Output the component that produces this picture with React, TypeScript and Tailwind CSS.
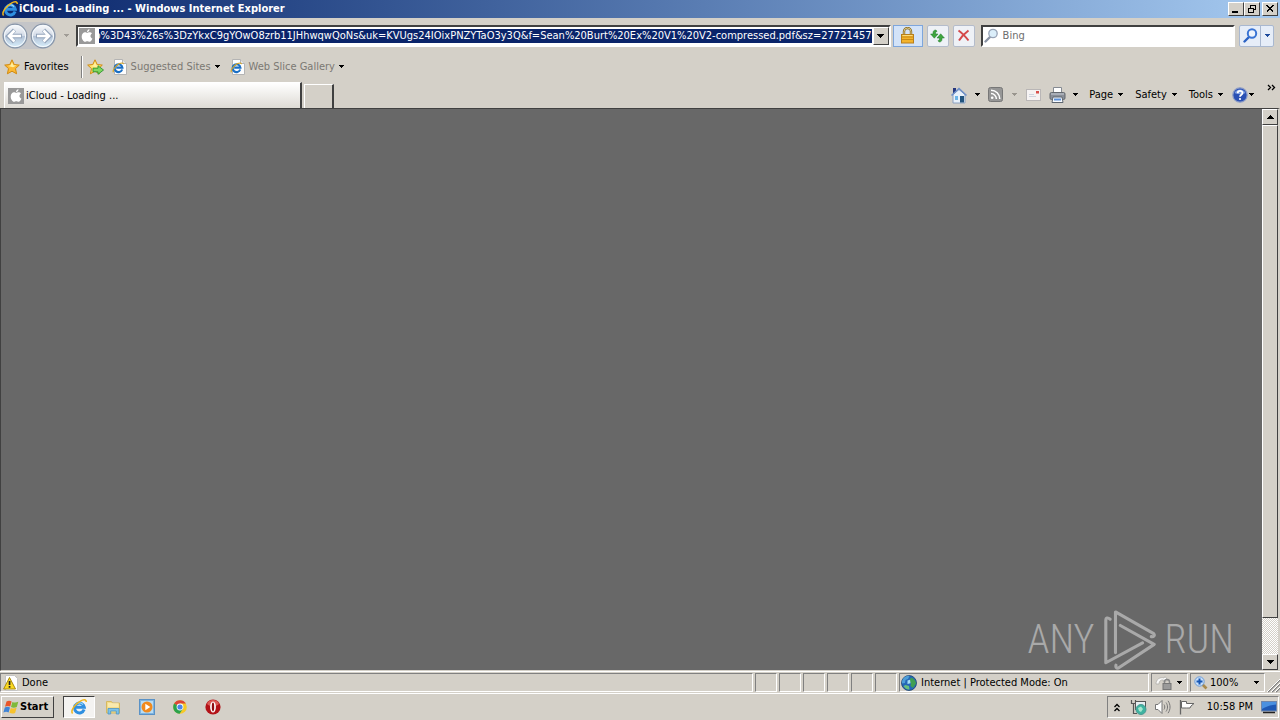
import { useEffect, useRef, useState, type ReactNode } from "react";

const URL_TEXT =
  "6p%3D43%26s%3DzYkxC9gYOwO8zrb11JHhwqwQoNs&uk=KVUgs24IOixPNZYTaO3y3Q&f=Sean%20Burt%20Ex%20V1%20V2-compressed.pdf&sz=27721457";

const MENUS = ["Page", "Safety", "Tools"];

function Caret({ className = "text-black" }: { className?: string }) {
  return (
    <svg className={`shrink-0 ${className}`} width="7" height="4" viewBox="0 0 7 4" fill="currentColor" shapeRendering="crispEdges">
      <path d="M1 0h5v1H1zM2 1h3v1H2zM3 2h1v1H3z" />
    </svg>
  );
}

function IeLogo({ size = 16 }: { size?: number }) {
  return (
    <svg className="shrink-0" width={size} height={size} viewBox="0 0 16 16" fill="none">
      <path d="M13.1 10.6A4.900 4.900 0 1 1 13.300 8.200H5" stroke="#2f8fe0" strokeWidth="3" />
      <path d="M4.200 6.800A4.600 4.600 0 0 1 12 5.600" stroke="#9bdcfb" strokeWidth="1.200" />
      <path d="M1.600 14.600C-.8 11.800 4 5 9 2.300 12.400.3 15.500.2 15.200 3" stroke="#f0b51c" strokeWidth="1.500" />
    </svg>
  );
}

function PageIe() {
  return (
    <svg className="shrink-0" width="16" height="16" viewBox="0 0 16 16" fill="none">
      <path d="M2.500.5h8l4 4v11h-12z" fill="#fdfdfd" stroke="#b4b4b4" />
      <path d="M10.500.5v4h4" fill="#e4e4e4" stroke="#b4b4b4" />
      <path d="M10.200 10.500A3.900 3.900 0 1 1 10.400 8.600H4.200" stroke="#1b6fc4" strokeWidth="2.100" />
      <path d="M1.400 13.200C.2 11 4 6.400 7.600 4.600 10 3.500 11.500 3.800 11.300 5.200" stroke="#d9a520" strokeWidth="1.100" />
    </svg>
  );
}

function AppleIcon() {
  return (
    <svg className="shrink-0" width="16" height="16" viewBox="0 0 16 16">
      <rect width="16" height="16" fill="#999" />
      <path
        fill="#fff"
        d="M10.500 1.300c.1 1.500-1.100 2.800-2.500 2.900C7.800 2.700 9.100 1.400 10.500 1.300zM8.200 4.900c.6 0 1.400-.8 2.600-.7.9.1 1.700.5 2.200 1.200-2.200 1.300-1.900 4.200.4 5.100-.6 1.600-1.600 3.300-2.800 3.300-.9 0-1.300-.6-2.300-.6s-1.400.6-2.300.6C4.400 13.800 2.700 11 2.700 8.500c0-2.600 1.700-4.100 3.300-4.200 1 0 1.700.6 2.200.6z"
      />
    </svg>
  );
}

function Star({ add = false }: { add?: boolean }) {
  return (
    <svg className="shrink-0" width="17" height="16" viewBox="0 0 17 16">
      <path d="M8 .8l2.200 4.700 5.100.6-3.800 3.500 1.100 5.200L8 12.200l-4.600 2.600 1.100-5.200L.7 6.100l5.100-.6z" fill={add ? "#fde36a" : "#fcb934"} stroke="#d18a10" />
      <path d="M8 3l1.300 3.200 3.200.4L9 8.300 4 7l2.600-.8z" fill="#fff0a0" />
      {add && <path d="M6 9.200h5V6.700l5.500 4.300-5.500 4.300v-2.500H6z" fill="#7fd860" stroke="#2c9430" strokeWidth=".9" />}
    </svg>
  );
}

function NavCircle({ flip = false }: { flip?: boolean }) {
  return (
    <svg width="26" height="26" viewBox="0 0 26 26" fill="none">
      <defs>
        <linearGradient id="orb" x1="0" y1="0" x2="0" y2="1">
          <stop offset="0" stopColor="#fafbfd" />
          <stop offset=".48" stopColor="#d3dbe7" />
          <stop offset=".52" stopColor="#b3c2d6" />
          <stop offset="1" stopColor="#d8f0fd" />
        </linearGradient>
      </defs>
      <circle cx="13" cy="13" r="11.800" fill="url(#orb)" stroke="#8795a8" strokeWidth="1.200" />
      <circle cx="13" cy="13" r="10.600" stroke="#f6fafd" />
      <g transform={flip ? "matrix(-1 0 0 1 26 0)" : undefined}>
        <path d="M12.500 7L6.500 13l6 6M7 13h13" stroke="#94a5bb" strokeWidth="4.400" />
        <path d="M12.500 7.500L7 13l5.500 5.500M7.500 13H19" stroke="#fff" strokeWidth="2.600" />
      </g>
    </svg>
  );
}

function LockIcon() {
  return (
    <svg width="15" height="17" viewBox="0 0 15 17" fill="none">
      <path d="M4 8V4.500a3.500 3.500 0 0 1 7 0V8" stroke="#8a6a20" strokeWidth="2.400" />
      <path d="M4 8V4.500a3.500 3.500 0 0 1 7 0V8" stroke="#d9c98c" strokeWidth="1" />
      <rect x="1.500" y="7.500" width="12" height="8.500" fill="#f3b32c" stroke="#b87f1c" />
      <path d="M2 10h11M2 12.500h11" stroke="#c98b17" />
      <path d="M2.500 8.500h10" stroke="#fbdc7c" />
    </svg>
  );
}

function RefreshIcon() {
  return (
    <svg width="15" height="14" viewBox="0 0 15 14" fill="#3fa53f" stroke="#1f7a28" strokeWidth=".5">
      <path d="M6 1C4 1 3 2 3 4v1H.600l3.700 4.200L8 5H5.600V4c0-1 .4-1.400 1.400-1.600z" />
      <path d="M9 13c2 0 3-1 3-3V9h2.400l-3.700-4.200L7 9h2.400v1c0 1-.4 1.400-1.400 1.600z" />
    </svg>
  );
}

function StopIcon() {
  return (
    <svg width="13" height="13" viewBox="0 0 13 13" fill="none">
      <path d="M1.500 1.500c3 2 6 5 10 10M11.500 1.500c-4 3-7 6-9.500 10" stroke="#d4484a" strokeWidth="2" />
    </svg>
  );
}

function SearchIcon({ blue = false }: { blue?: boolean }) {
  return (
    <svg className="shrink-0" width="15" height="15" viewBox="0 0 15 15" fill="none">
      <path d="M6 9l-4.500 4.500" stroke={blue ? "#2a62c4" : "#8a93a4"} strokeWidth="2.400" strokeLinecap="round" />
      <circle cx="9" cy="5.500" r="4.200" fill={blue ? "#eef4fd" : "#dbeefa"} stroke={blue ? "#3a74d4" : "#97a3b6"} strokeWidth={blue ? 2 : 1.3} />
    </svg>
  );
}

function HomeIcon() {
  return (
    <svg width="18" height="18" viewBox="0 0 18 18">
      <path d="M3 2h3v6H3z" fill="#26377e" />
      <path d="M3 8.500l6-5 6 5V17H3z" fill="#e8f1fb" stroke="#8ba0c0" />
      <path d="M1.500 9.500L9 2.500l7.500 7" fill="none" stroke="#6f90c8" strokeWidth="1.600" />
      <path d="M5 10h3v4H5z" fill="#6db6e8" />
      <path d="M10 10h4v6.500h-4z" fill="#22547f" />
    </svg>
  );
}

function RssIcon() {
  return (
    <svg width="15" height="15" viewBox="0 0 15 15" fill="none">
      <rect x=".5" y=".5" width="14" height="14" rx="2" fill="#969696" stroke="#777" />
      <path d="M3 3.200a8.800 8.800 0 0 1 8.800 8.800M3 6.600A5.400 5.400 0 0 1 8.400 12" stroke="#fff" strokeWidth="1.500" />
      <circle cx="4.200" cy="10.800" r="1.300" fill="#fff" />
    </svg>
  );
}

function MailIcon() {
  return (
    <svg width="15" height="12" viewBox="0 0 15 12" fill="none">
      <rect x=".5" y=".5" width="14" height="11" fill="#f6f3f3" stroke="#b9b6b6" />
      <rect x="10" y="2" width="3" height="2.500" fill="#d8504c" />
      <path d="M3 5.500h5M3 7.500h7" stroke="#cdd3de" />
    </svg>
  );
}

function PrintIcon() {
  return (
    <svg width="17" height="16" viewBox="0 0 17 16">
      <path d="M4.500.5h8v5h-8z" fill="#fff" stroke="#858a92" />
      <rect x="1" y="5.500" width="15" height="7" rx="1.500" fill="#8a8f98" stroke="#64686e" />
      <path d="M2 7h13" stroke="#c9ced6" />
      <path d="M4 10h9l1 5.500H3z" fill="#f8fbff" stroke="#5e6670" />
      <path d="M5 12.500h7" stroke="#5b8fd6" strokeWidth="2" />
    </svg>
  );
}

function HelpIcon() {
  return (
    <svg width="16" height="16" viewBox="0 0 16 16" fill="none">
      <circle cx="8" cy="8" r="7.200" fill="#2a50b4" stroke="#8c9cc6" strokeWidth="1.200" />
      <path d="M2.500 6a6 6 0 0 1 11 0c-3 1.500-8 1.500-11 0z" fill="#7b9ce2" />
      <path d="M5.700 6.200c0-3 4.800-3 4.800-.2C10.500 7.800 8 7.600 8 9.700" stroke="#fff" strokeWidth="1.800" />
      <circle cx="8" cy="12" r="1.100" fill="#fff" />
    </svg>
  );
}

function GlobeIcon() {
  return (
    <svg className="shrink-0" width="16" height="16" viewBox="0 0 16 16">
      <circle cx="8" cy="8" r="7.500" fill="#2467b8" stroke="#1d4270" strokeWidth=".8" />
      <path d="M2 4c2-3 5-3.500 6.500-3L7 4 4.500 5 4 8 1 8.500C.8 7 1 5.500 2 4z" fill="#4f9fd8" />
      <path d="M10 2.500c3 1 5 3.500 5 6L12 13l-2.500-2L10 8 8 6z" fill="#3f9f52" />
      <path d="M4.500 10l3.500 1 .5 3.500C6 15 3.500 13 2.500 11z" fill="#69c07d" />
      <path d="M6.500 5.500l2.500-.8.5 3.600-3 .8z" fill="#a6e0f5" />
    </svg>
  );
}

function WarnIcon() {
  return (
    <svg className="shrink-0" width="16" height="16" viewBox="0 0 16 16">
      <path d="M2.500.5h9l3 3v12h-12z" fill="#fff" stroke="#c5c5c5" />
      <path d="M6.500 2.500L12.500 14H.600z" fill="#fbd920" stroke="#a88a10" />
      <path d="M5.700 6h1.700v4H5.700zM5.700 11h1.700v1.700H5.700z" fill="#222" />
    </svg>
  );
}

function ProtectIcon() {
  return (
    <svg width="18" height="16" viewBox="0 0 18 16" fill="none">
      <path d="M1 9a6 6 0 0 1 8-6l1-1.500 3 4-5 1 .5-1.500C6 4.500 4 6 4 9z" fill="#fafafa" stroke="#b0aeaa" strokeWidth=".8" />
      <path d="M9.500 9V7a2.500 2.500 0 0 1 5 0v2" stroke="#888" strokeWidth="1.500" />
      <rect x="8" y="8.500" width="8" height="6" fill="#9a9a9a" stroke="#777" />
    </svg>
  );
}

function ZoomIcon() {
  return (
    <svg width="14" height="14" viewBox="0 0 14 14" fill="none">
      <path d="M8.500 8.500l4 4" stroke="#a98a4c" strokeWidth="2.600" />
      <circle cx="5.500" cy="5.500" r="4.700" fill="#c6def8" stroke="#6d9cd8" />
      <path d="M5.500 2.500v6M2.500 5.500h6" stroke="#1656b4" strokeWidth="2" />
    </svg>
  );
}

function WindowsFlag() {
  return (
    <svg className="shrink-0" width="17" height="16" viewBox="0 0 17 16">
      <path d="M3.500 2.600C5.200 1.500 7 1.600 8.600 2.500L7.200 7.600C5.600 6.700 3.900 6.600 2 7.700z" fill="#e8562a" />
      <path d="M9.400 2.900c1.900 1 3.700.9 5.900-.1l-1.500 5.100c-1.900 1-3.900 1.100-5.800.1z" fill="#7fb93a" />
      <path d="M1.800 8.500c1.800-1 3.600-.9 5.200 0l-1.400 5C3.900 12.600 2.200 12.600.4 13.600z" fill="#3f84d6" />
      <path d="M7.800 8.900c1.900 1 3.700.9 5.800-.1l-1.500 5.100c-2 1-3.900.9-5.700-.1z" fill="#f7c22c" />
    </svg>
  );
}

function FolderIcon() {
  return (
    <svg width="17" height="16" viewBox="0 0 17 16">
      <path d="M1.500 2.500h5l1 1.500h7v10h-13z" fill="#f3dc8a" stroke="#d6b860" />
      <path d="M3 5h10.500M3 7h10.500" stroke="#fff6cf" strokeWidth="1.200" />
      <path d="M3 15V9.500h11V15h-2.700v-3H5.700v3z" fill="#7cc2ea" stroke="#4c94c4" strokeWidth=".8" />
    </svg>
  );
}

function MediaIcon() {
  return (
    <svg width="16" height="16" viewBox="0 0 16 16">
      <rect x=".5" y=".5" width="15" height="15" fill="#7eb4e0" stroke="#5a92c6" />
      <rect x="2" y="2" width="12" height="12" fill="#b8dcf4" />
      <circle cx="8" cy="8" r="5.500" fill="#f08a1e" />
      <path d="M6.300 4.800L11.300 8l-5 3.200z" fill="#fff" />
    </svg>
  );
}

function ChromeIcon() {
  return (
    <svg width="14" height="14" viewBox="0 0 14 14">
      <circle cx="7" cy="7" r="6.800" fill="#f6c926" />
      <path d="M7 7L1.100 3.600A6.800 6.800 0 0 1 12.900 3.600H7z" fill="#dc4437" />
      <path d="M7 7L1.100 3.600A6.800 6.800 0 0 0 6.600 13.800L10 8.700z" fill="#2ba24c" />
      <circle cx="7" cy="7" r="3.400" fill="#fff" />
      <circle cx="7" cy="7" r="2.600" fill="#4a86e8" />
    </svg>
  );
}

function OperaIcon() {
  return (
    <svg width="16" height="16" viewBox="0 0 16 16">
      <circle cx="8" cy="8" r="7.600" fill="#b31218" />
      <path d="M2 5a6.500 6.500 0 0 1 12 0C11 8 5 8 2 5z" fill="#dd5a55" />
      <ellipse cx="8" cy="8" rx="2.900" ry="5.600" fill="#fff" />
      <ellipse cx="8" cy="8" rx="1.200" ry="4.400" fill="#8f0c11" />
    </svg>
  );
}

function NetworkIcon() {
  return (
    <svg width="17" height="17" viewBox="0 0 17 17" fill="none">
      <path d="M1.500 1v3.500h4V1M3.500 4.500v10H7" stroke="#555" strokeWidth="1.200" />
      <rect x="5.500" y="2.500" width="10" height="8" fill="#e7eef2" stroke="#555" />
      <circle cx="11" cy="10.500" r="5" fill="#3fb3a0" stroke="#4b9a94" />
      <path d="M8 9l3-1.500L13 10l-2 3-2-1z" fill="#a5e6cf" />
    </svg>
  );
}

function SpeakerIcon() {
  return (
    <svg width="17" height="16" viewBox="0 0 17 16" fill="none" stroke="#777">
      <path d="M1.500 5.500h2.500L8 1.500v13L4 10.500H1.500z" fill="#fff" />
      <path d="M10 5.500c1 1.500 1 3.500 0 5M12 3.500c2 2.700 2 6.300 0 9M14 1.800c2.700 3.700 2.700 8.700 0 12.400" />
    </svg>
  );
}

function FlagIcon() {
  return (
    <svg width="17" height="16" viewBox="0 0 17 16" fill="none" stroke="#666">
      <path d="M2.500 1v14.500" strokeWidth="1.300" />
      <path d="M3.500 2.500h5v2h7.500l-3 2.500-1 2H8.500V9h-5z" fill="#fff" />
    </svg>
  );
}

function DesktopIcon() {
  return (
    <svg width="16" height="14" viewBox="0 0 16 14">
      <rect x=".5" y="1.500" width="15" height="9.500" fill="#1e58b4" stroke="#6f86ab" />
      <path d="M1 2h14v2.500C9 5 5 7 1 9z" fill="#4a90e0" />
      <path d="M2 12.500h12" stroke="#222" strokeWidth="1.500" />
    </svg>
  );
}

function Watermark() {
  return (
    <div className="pointer-events-none absolute right-7 bottom-0 flex items-center gap-2 font-['Roboto_Condensed','Roboto'] text-[40px] leading-none font-light text-[#a9a9a9]">
      <span>ANY</span>
      <svg width="54" height="60" viewBox="0 0 54 62" fill="none" stroke="currentColor" strokeWidth="3.200" strokeLinejoin="round" strokeLinecap="round">
        <path d="M6.500 9.500C4 7.500 2 8 2 11v43.500L40 34" />
        <path d="M12 44V2L51.500 24.500c1.500 2 0 3.500-2.500 3" />
        <path d="M17 16L52 35.500 15 60c-2 .5-3-1-2.500-3" />
      </svg>
      <span>RUN</span>
    </div>
  );
}

function WinButton({ label, children }: { label: string; children: ReactNode }) {
  return (
    <button
      aria-label={label}
      className="flex h-[14px] w-4 items-center justify-center border border-t-white border-l-white border-r-[#404040] border-b-[#404040] bg-[#d4d0c8]"
    >
      <svg width="10" height="10" viewBox="0 0 10 10" fill="none" stroke="#000" shapeRendering="crispEdges">
        {children}
      </svg>
    </button>
  );
}

function ScrollButton({ up = false }: { up?: boolean }) {
  return (
    <button
      aria-label={up ? "Scroll up" : "Scroll down"}
      className="flex h-4 w-4 shrink-0 items-center justify-center border border-t-white border-l-white border-r-[#404040] border-b-[#404040] bg-[#d4d0c8]"
    >
      <svg width="7" height="4" viewBox="0 0 7 4" shapeRendering="crispEdges">
        <path d={up ? "M3 0h1v1h1v1h1v1h1v1H0V3h1V2h1V1h1z" : "M0 0h7v1H6v1H5v1H4v1H3V3H2V2H1V1H0z"} />
      </svg>
    </button>
  );
}

function StatusPanel({ className = "", children }: { className?: string; children?: ReactNode }) {
  return (
    <div className={`flex h-[19px] items-center border border-t-[#808080] border-l-[#808080] border-r-white border-b-white ${className}`}>
      {children}
    </div>
  );
}

function TitleBar() {
  return (
    <header className="flex h-[18px] shrink-0 items-center bg-linear-to-r from-[#0a246a] to-[#a6caf0] pr-[2px] pl-[2px]">
      <IeLogo />
      <h1 className="flex-1 pl-px font-bold text-white">iCloud - Loading ... - Windows Internet Explorer</h1>
      <div className="flex">
        <WinButton label="Minimize">
          <path d="M1 8h6M1 7h6" />
        </WinButton>
        <WinButton label="Restore">
          <path d="M3.500 4V1.500h5v4H7M3 1h6M1.500 4.500h5v4h-5zM1 4h6" />
        </WinButton>
        <span className="w-[2px]" />
        <WinButton label="Close">
          <path d="M1.500 1.500l7 7M8.500 1.500l-7 7M2.500 1.500l6 6M7.500 1.500l-6 6" />
        </WinButton>
      </div>
    </header>
  );
}

function NavBar() {
  const [url, setUrl] = useState(URL_TEXT);
  const [query, setQuery] = useState("");
  const addressRef = useRef<HTMLInputElement>(null);

  // keep the end of a long address in view
  useEffect(() => {
    const el = addressRef.current;
    if (el) el.scrollLeft = el.scrollWidth;
  }, []);

  return (
    <div className="flex h-[35px] shrink-0 items-center pr-[6px] pl-[2px]">
      <div className="flex h-[27px] items-center gap-[2px] rounded-full bg-[#c4c5c8]">
        <button aria-label="Back"><NavCircle /></button>
        <button aria-label="Forward"><NavCircle flip /></button>
      </div>
      <button aria-label="Recent pages" className="flex w-5 justify-center"><Caret className="text-[#a09c96]" /></button>

      <div className="flex h-[22px] min-w-0 flex-1 items-center border-2 border-t-[#404040] border-l-[#404040] border-r-white border-b-white bg-white pl-px">
        <AppleIcon />
        <input
          ref={addressRef}
          aria-label="Address"
          value={url}
          onChange={(e) => setUrl(e.target.value)}
          className="ml-1 h-[14px] min-w-0 flex-1 bg-[#0a246a] text-white outline-none"
        />
        <button
          aria-label="Show address history"
          className="ml-px flex h-[18px] w-4 items-center justify-center border border-t-white border-l-white border-r-[#404040] border-b-[#404040] bg-[#d4d0c8]"
        >
          <svg width="7" height="4" viewBox="0 0 7 4" shapeRendering="crispEdges">
            <path d="M0 0h7v1H6v1H5v1H4v1H3V3H2V2H1V1H0z" />
          </svg>
        </button>
      </div>

      <button aria-label="Security report" className="ml-[2px] flex h-[22px] w-[30px] items-center justify-center border border-[#7ea6dc] bg-[#d3e3f8]"><LockIcon /></button>
      <button aria-label="Refresh" className="ml-1 flex h-[22px] w-[22px] items-center justify-center rounded-xs border border-[#b4bccb] bg-[#eef1f6]"><RefreshIcon /></button>
      <button aria-label="Stop" className="ml-1 flex h-[22px] w-[22px] items-center justify-center rounded-xs border border-[#b4bccb] bg-[#eef1f6]"><StopIcon /></button>

      <div className="ml-[6px] flex h-[22px] w-1/5 items-center gap-1 border-2 border-t-[#404040] border-l-[#404040] border-r-white border-b-white bg-white pl-px">
        <SearchIcon />
        <input
          aria-label="Search"
          placeholder="Bing"
          value={query}
          onChange={(e) => setQuery(e.target.value)}
          className="min-w-0 flex-1 outline-none placeholder:text-[#6d6d6d]"
        />
      </div>
      <div className="ml-1 flex h-[22px] rounded-xs border border-[#a9b8d0] bg-[#e6edf8]">
        <button aria-label="Search Bing" className="flex w-[21px] items-center justify-center border-r border-[#a9b8d0]"><SearchIcon blue /></button>
        <button aria-label="Search options" className="flex w-3 items-center justify-center"><Caret className="text-[#1d4a9c]" /></button>
      </div>
    </div>
  );
}

function FavoritesBar() {
  return (
    <div className="flex h-7 shrink-0 items-center pl-1">
      <button className="flex items-center gap-[3px]">
        <Star />
        Favorites
      </button>
      <div className="ml-3 h-[22px] w-px bg-[#808080]" />
      <div className="h-[22px] w-px bg-white" />
      <button aria-label="Add to Favorites Bar" className="ml-1"><Star add /></button>
      <button className="ml-2 flex items-center gap-[3px] text-[#7b7873]">
        <PageIe />
        Suggested Sites
        <Caret />
      </button>
      <button className="ml-[9px] flex items-center gap-[3px] text-[#7b7873]">
        <PageIe />
        Web Slice Gallery
        <Caret />
      </button>
    </div>
  );
}

function TabBar() {
  return (
    <div className="flex h-[27px] shrink-0 items-end pr-1 pl-1">
      <button className="flex h-[26px] w-[298px] items-center gap-[2px] border border-r-2 border-b-0 border-t-white border-l-white border-r-[#404040] bg-linear-to-b from-white to-[#dedbd5] pl-[3px]">
        <AppleIcon />
        iCloud - Loading ...
      </button>
      <button aria-label="New Tab" className="ml-[2px] h-6 w-[30px] border border-r-2 border-b-0 border-t-white border-l-white border-r-[#404040]" />
      <div className="ml-auto flex h-full items-center">
        <button aria-label="Home"><HomeIcon /></button>
        <button aria-label="Home options" className="ml-[6px]"><Caret /></button>
        <button aria-label="Feeds" className="ml-[7px]"><RssIcon /></button>
        <button aria-label="Feed options" className="ml-2"><Caret className="text-[#99958e]" /></button>
        <button aria-label="Read mail" className="ml-2"><MailIcon /></button>
        <button aria-label="Print" className="ml-2"><PrintIcon /></button>
        <button aria-label="Print options" className="ml-[6px]"><Caret /></button>
        <div className="ml-[10px] flex gap-[11px]">
          {MENUS.map((menu) => (
            <button key={menu} className="flex items-center gap-1">
              {menu}
              <Caret />
            </button>
          ))}
        </div>
        <button aria-label="Help" className="ml-2 flex items-center"><HelpIcon /><Caret /></button>
        <button aria-label="More commands" className="ml-3 self-start">
          <svg width="9" height="14" viewBox="0 0 9 14" fill="none" stroke="#000" strokeWidth="1.300">
            <path d="M1 4l2.500 2.500L1 9M5 4l2.500 2.500L5 9" />
          </svg>
        </button>
      </div>
    </div>
  );
}

function StatusBar() {
  return (
    <footer className="flex h-[23px] shrink-0 items-center gap-[2px] border-y border-white">
      <StatusPanel className="flex-1 gap-[3px] pl-[2px]">
        <WarnIcon />
        Done
      </StatusPanel>
      {[0, 1, 2, 3, 4, 5].map((i) => (
        <StatusPanel key={i} className="w-[22px]" />
      ))}
      <StatusPanel className="w-[250px] gap-1 pl-px">
        <GlobeIcon />
        Internet | Protected Mode: On
      </StatusPanel>
      <StatusPanel className="w-[37px]">
        <button aria-label="Protected mode settings" className="flex items-center gap-[3px] pl-[3px]"><ProtectIcon /><Caret /></button>
      </StatusPanel>
      <StatusPanel className="w-[75px]">
        <button className="flex w-full items-center gap-[2px] pr-1 pl-[3px]">
          <ZoomIcon />
          100%
          <span className="ml-auto"><Caret /></span>
        </button>
      </StatusPanel>
      <svg className="self-end" width="13" height="14" viewBox="0 0 13 14" fill="none">
        <path d="M1 13L13 1M5 13l8-8M9 13l4-4" stroke="#808080" strokeWidth="1.500" />
        <path d="M0 13L13 0M4 13l9-9M8 13l5-5" stroke="#fff" />
      </svg>
    </footer>
  );
}

function Taskbar() {
  return (
    <nav className="flex h-[26px] shrink-0 items-center pr-px pl-px">
      <button className="flex h-[22px] w-[53px] items-center border border-t-white border-l-white border-r-[#404040] border-b-[#404040] pl-px font-bold">
        <WindowsFlag />
        Start
      </button>
      <button
        aria-label="Internet Explorer"
        className="ml-[9px] flex h-[22px] w-8 items-center justify-center border border-t-[#404040] border-l-[#404040] border-r-white border-b-white bg-[#f4f3f1]"
      >
        <IeLogo />
      </button>
      <div className="ml-[10px] flex gap-[17px]">
        <button aria-label="Windows Explorer"><FolderIcon /></button>
        <button aria-label="Windows Media Player"><MediaIcon /></button>
        <button aria-label="Google Chrome" className="flex w-4 items-center justify-center"><ChromeIcon /></button>
        <button aria-label="Opera"><OperaIcon /></button>
      </div>
      <div className="ml-auto flex h-[22px] items-center border border-t-[#808080] border-l-[#808080] border-r-white border-b-white pr-px pl-[6px]">
        <button aria-label="Show hidden icons">
          <svg width="6" height="9" viewBox="0 0 6 9" fill="none" stroke="#000" strokeWidth="1.300">
            <path d="M.5 4L3 1.500 5.500 4M.5 8L3 5.500 5.500 8" />
          </svg>
        </button>
        <div className="ml-[10px] flex gap-[7px]">
          <NetworkIcon />
          <SpeakerIcon />
          <FlagIcon />
        </div>
        <time className="ml-3">10:58 PM</time>
        <button aria-label="Show desktop" className="ml-2"><DesktopIcon /></button>
      </div>
    </nav>
  );
}

export default function App() {
  return (
    <div className="flex h-screen flex-col overflow-hidden bg-[#d4d0c8] font-['DejaVu_Sans_Condensed','DejaVu_Sans',sans-serif] text-[11px] leading-[14px] whitespace-nowrap text-black">
      <TitleBar />
      <NavBar />
      <FavoritesBar />
      <TabBar />

      {/* Viewport */}
      <main className="flex min-h-0 flex-1 border border-r-2 border-t-[#404040] border-l-[#404040] border-r-[#d4d0c8] border-b-[#d4d0c8]">
        <div className="relative flex-1 bg-[#686868]">
          <Watermark />
        </div>
        <div className="flex w-4 flex-col bg-[repeating-conic-gradient(#fff_0_25%,#d4d0c8_0_50%)] bg-size-[2px_2px]">
          <ScrollButton up />
          <div className="flex-1 border border-t-white border-l-white border-r-[#404040] border-b-[#404040] bg-[#d4d0c8]" />
          <div className="h-9" />
          <ScrollButton />
        </div>
      </main>

      <StatusBar />
      <Taskbar />
    </div>
  );
}
